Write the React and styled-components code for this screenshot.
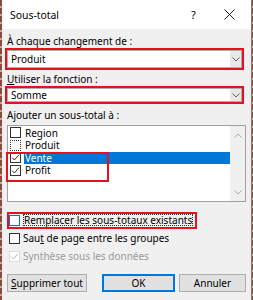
import styled, { createGlobalStyle } from "styled-components"

const GlobalStyle = createGlobalStyle`
    html, body {
        margin: 0;
        padding: 0;
    }
    body {
        width: 253px;
        height: 300px;
        overflow: hidden;
        font-family: "Segoe UI", "Noto Sans", sans-serif;
        font-size: 10px;
        color: #000;
    }
`

const fields = [
    { name: "Region", checked: false },
    { name: "Produit", checked: false, dotted: true },
    { name: "Vente", checked: true, selected: true },
    { name: "Profit", checked: true },
]

function Check({ color = "#333" }) {
    return (
        <svg width="9" height="9" viewBox="0 0 9 9">
            <path d="M1 4.6 L3.4 7 L8 1.6" fill="none" stroke={color} strokeWidth="1" />
        </svg>
    )
}

function Chevron({ down = true, color = "#606060" }) {
    return (
        <svg width="8" height="5" viewBox="0 0 8 5">
            <path d={down ? "M0.5 0.5 L4 4 L7.5 0.5" : "M0.5 4.5 L4 1 L7.5 4.5"} fill="none" stroke={color} strokeWidth="1" />
        </svg>
    )
}

export default function App() {
    return (
        <>
            <GlobalStyle />
            <Screen>
                <Dialog>
                    <TitleBar>
                        <Title>Sous-total</Title>
                        <HelpButton>?</HelpButton>
                        <CloseButton>
                            <svg width="11" height="11" viewBox="0 0 11 11">
                                <path d="M0.5 0.5 L10.5 10.5 M10.5 0.5 L0.5 10.5" stroke="#222" strokeWidth="1" />
                            </svg>
                        </CloseButton>
                    </TitleBar>
                    <Body>
                        <Label>À chaque changement de :</Label>
                        <Select $h={18} $marked>
                            <span>Produit</span>
                            <DropArrow><Chevron /></DropArrow>
                        </Select>
                        <Label $top={5}><u>U</u>tiliser la fonction :</Label>
                        <Select $h={14} $marked>
                            <span>Somme</span>
                            <DropArrow><Chevron /></DropArrow>
                        </Select>
                        <Label $top={7}>A<u>j</u>outer un sous-total à :</Label>
                        <ListBox>
                            <Items>
                                {fields.map(f => (
                                    <Item key={f.name}>
                                        <Box $dotted={f.dotted}>{f.checked && <Check />}</Box>
                                        <ItemText $selected={f.selected}>{f.name}</ItemText>
                                    </Item>
                                ))}
                            </Items>
                            <ScrollBar>
                                <Chevron down={false} color="#a8a8a8" />
                                <Chevron color="#a8a8a8" />
                            </ScrollBar>
                            <Marker />
                        </ListBox>
                        <Options>
                            <Option>
                                <OptionInner $marked>
                                    <Box $focus />
                                    <FocusText>Remplacer les sous-totaux existants</FocusText>
                                </OptionInner>
                            </Option>
                            <Option>
                                <OptionInner>
                                    <Box />
                                    <span>Sau<u>t</u> de page entre les groupes</span>
                                </OptionInner>
                            </Option>
                            <Option $disabled>
                                <OptionInner>
                                    <Box $disabled><Check color="#b8b8b8" /></Box>
                                    <span>Synthèse sous les données</span>
                                </OptionInner>
                            </Option>
                        </Options>
                        <Buttons>
                            <Button $w={80}><u>S</u>upprimer tout</Button>
                            <Button $w={73} $default>OK</Button>
                            <Button $w={67}>Annuler</Button>
                        </Buttons>
                    </Body>
                </Dialog>
            </Screen>
        </>
    )
}

const Screen = styled.div`
    width: 253px;
    height: 300px;
    display: flex;
    background: repeating-linear-gradient(180deg, #8b4a3c 0 6px, #c9a49a 6px 8px);
`

const Dialog = styled.div`
    margin-left: 2px;
    width: 249px;
    height: 300px;
    background: #f0f0f0;
    border-right: 1px solid #7a7a7a;
    display: flex;
    flex-direction: column;
`

const TitleBar = styled.div`
    height: 29px;
    background: #fff;
    display: flex;
    align-items: center;
    padding-left: 8px;
`

const Title = styled.div`
    flex: 1;
    font-size: 10.4px;
`

const HelpButton = styled.div`
    width: 10px;
    font-size: 11px;
    margin-right: 23px;
`

const CloseButton = styled.div`
    display: flex;
    margin-right: 16px;
`

const Body = styled.div`
    flex: 1;
    display: flex;
    flex-direction: column;
    padding: 6px 5px 0 5px;
`

const Label = styled.div`
    height: 13px;
    line-height: 13px;
    margin-top: ${p => p.$top || 0}px;
    white-space: nowrap;
`

const Select = styled.div`
    margin-top: 2px;
    margin-right: 4px;
    height: ${p => p.$h}px;
    box-sizing: border-box;
    background: #fff;
    border: 1px solid #adadad;
    display: flex;
    align-items: center;
    padding-left: 3px;
    outline: ${p => p.$marked ? "2px solid #e8101c" : "none"};
    > span {
        flex: 1;
    }
`

const DropArrow = styled.div`
    width: 11px;
    align-self: stretch;
    background: #e8e8e8;
    display: flex;
    align-items: center;
    justify-content: center;
`

const ListBox = styled.div`
    position: relative;
    margin-top: 3px;
    height: 77px;
    box-sizing: border-box;
    background: #fff;
    border: 1px solid #a0a0a0;
    display: flex;
`

const Items = styled.div`
    flex: 1;
    padding-top: 0.5px;
    display: flex;
    flex-direction: column;
`

const Item = styled.div`
    height: 12.5px;
    display: flex;
    align-items: center;
    padding-left: 2px;
`

const Box = styled.div`
    width: 11px;
    height: 11px;
    box-sizing: border-box;
    flex-shrink: 0;
    background: #fff;
    border: 1px ${p => p.$dotted ? "dotted" : "solid"} ${p => p.$disabled ? "#dcdcdc" : p.$focus ? "#0078d7" : "#333"};
    display: flex;
    align-items: center;
    justify-content: center;
    margin-right: 3px;
`

const ItemText = styled.div`
    flex: 1;
    height: 12px;
    line-height: 12px;
    padding-left: 1px;
    background: ${p => p.$selected ? "#0078d7" : "transparent"};
    color: ${p => p.$selected ? "#fff" : "#000"};
`

const ScrollBar = styled.div`
    width: 15px;
    background: #f0f0f0;
    display: flex;
    flex-direction: column;
    align-items: center;
    justify-content: space-between;
    padding: 7px 0 6px;
`

const Marker = styled.div`
    position: absolute;
    left: -2px;
    top: 26px;
    width: 103px;
    height: 30px;
    box-sizing: border-box;
    border: 2px solid #e8101c;
    pointer-events: none;
`

const Options = styled.div`
    margin-top: 9px;
    display: flex;
    flex-direction: column;
`

const Option = styled.div`
    height: 18px;
    display: flex;
    align-items: center;
    padding-left: 2px;
    color: ${p => p.$disabled ? "#9a9a9a" : "#000"};
`

const OptionInner = styled.div`
    height: 13px;
    display: flex;
    align-items: center;
    padding-right: 2px;
    outline: ${p => p.$marked ? "2px solid #e8101c" : "none"};
    outline-offset: 0;
`

const FocusText = styled.span`
    outline: 1px dotted #333;
    outline-offset: -1px;
    padding: 0 1px;
    line-height: 12px;
`

const Buttons = styled.div`
    margin-top: 9px;
    display: flex;
    gap: 4px;
    > :first-child {
        margin-right: 11px;
    }
`

const Button = styled.div`
    width: ${p => p.$w}px;
    height: 18px;
    box-sizing: border-box;
    background: #e1e1e1;
    border: ${p => p.$default ? "2px solid #0078d7" : "1px solid #adadad"};
    display: flex;
    align-items: center;
    justify-content: center;
`
